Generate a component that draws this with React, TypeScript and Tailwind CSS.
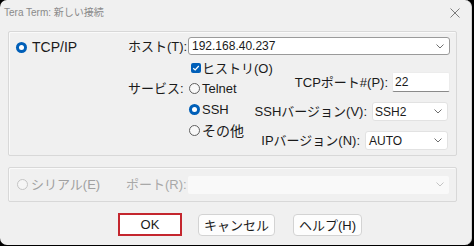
import React from "react";

const Chevron = ({ color = "#6f6f6f" }: { color?: string }) => (
  <svg width="8" height="5" viewBox="0 0 8 5" className="shrink-0">
    <path d="M0.5 0.5 L4 4 L7.5 0.5" fill="none" stroke={color} strokeWidth="1" />
  </svg>
);

const RadioOn = () => (
  <span className="w-[11px] h-[11px] rounded-full bg-[#005fb8] flex items-center justify-center shrink-0">
    <span className="w-[5px] h-[5px] rounded-full bg-white" />
  </span>
);

const RadioOff = ({ disabled = false }: { disabled?: boolean }) => (
  <span
    className={
      disabled
        ? "w-[11px] h-[11px] rounded-full border border-[#c4c4c4] bg-[#f5f5f5] shrink-0"
        : "w-[11px] h-[11px] rounded-full border border-[#5f5f5f] bg-[#f8f8f8] shrink-0"
    }
  />
);

export default function App() {
  return (
    <div className="w-[474px] h-[246px] bg-black font-['Liberation_Sans','Noto_Sans_CJK_JP',sans-serif] text-[13px] text-[#1a1a1a] leading-none whitespace-nowrap">
      <div className="w-[472px] h-[245px] rounded-[7px] bg-[#f0f0f0] border-r border-[#d4d4d4] flex flex-col overflow-hidden">
        {/* title bar */}
        <div className="h-[25px] flex items-center justify-between pl-[4px] pr-[11px] shrink-0">
          <span className="text-[10px] text-[#8a8a8a]">Tera Term: 新しい接続</span>
          <svg width="10" height="10" viewBox="0 0 10 10">
            <path d="M0.5 0.5 L9.5 9.5 M9.5 0.5 L0.5 9.5" stroke="#7c7c7c" strokeWidth="1" />
          </svg>
        </div>

        <div className="pl-[8px] flex flex-col">
          {/* group 1 */}
          <div className="mt-[6px] w-[449px] h-[125px] border border-[#d8d8d8] rounded-[2px] flex shadow-[inset_1px_1px_0_#fafafa]">
            <div className="w-[119px] shrink-0 pl-[7px]">
              <div className="mt-[5px] h-[20px] flex items-center gap-[5px]">
                <RadioOn />
                <span className="text-[14px]">TCP/IP</span>
              </div>
            </div>
            <div className="flex-1 min-w-0 flex flex-col">
              <div className="mt-[5px] h-[18px] flex items-center">
                <span className="w-[60px] shrink-0">ホスト(T):</span>
                <div className="w-[262px] h-[18px] bg-white border border-[#9a9a9a] rounded-[3px] flex items-center justify-between pl-[3px] pr-[5px]">
                  <span className="text-[12px]">192.168.40.237</span>
                  <Chevron />
                </div>
              </div>
              <div className="flex">
                <div className="w-[125px] shrink-0 flex flex-col">
                  <div className="mt-[3px] h-[20px] flex items-center pl-[63px] gap-[1px]">
                    <span className="w-[10px] h-[10px] rounded-[2px] bg-[#005fb8] flex items-center justify-center shrink-0">
                      <svg width="8" height="8" viewBox="0 0 8 8">
                        <path d="M1.2 4.2 L3.2 6 L6.8 2" fill="none" stroke="white" strokeWidth="1.2" />
                      </svg>
                    </span>
                    <span>ヒストリ(O)</span>
                  </div>
                  <div className="h-[21px] flex items-center">
                    <span className="w-[61px] shrink-0">サービス:</span>
                    <RadioOff />
                    <span className="ml-[2px]">Telnet</span>
                  </div>
                  <div className="h-[21px] flex items-center pl-[61px]">
                    <RadioOn />
                    <span className="ml-[2px]">SSH</span>
                  </div>
                  <div className="h-[21px] flex items-center pl-[61px]">
                    <RadioOff />
                    <span className="ml-[2px] text-[14px]">その他</span>
                  </div>
                </div>
                <div className="flex-1 min-w-0 flex flex-col items-end pr-[6px]">
                  <div className="mt-[17px] h-[20px] flex items-center gap-[4px] shrink-0">
                    <span>TCPポート#(P):</span>
                    <div className="w-[58px] h-[20px] bg-white border border-[#ececec] border-b-[#8a8a8a] rounded-[2px] flex items-center pl-[2px] shrink-0">
                      <span className="text-[12px]">22</span>
                    </div>
                  </div>
                  <div className="mt-[10px] h-[19px] flex items-center gap-[5px] pr-[2px] shrink-0">
                    <span>SSHバージョン(V):</span>
                    <div className="w-[76px] h-[19px] bg-white border border-[#e2e2e2] rounded-[3px] flex items-center justify-between pl-[2px] pr-[5px] shrink-0">
                      <span className="text-[12px]">SSH2</span>
                      <Chevron />
                    </div>
                  </div>
                  <div className="mt-[10px] h-[19px] flex items-center gap-[5px] pr-[2px] shrink-0">
                    <span>IPバージョン(N):</span>
                    <div className="w-[83px] h-[19px] bg-white border border-[#e2e2e2] rounded-[3px] flex items-center justify-between pl-[3px] pr-[5px] shrink-0">
                      <span className="text-[12px]">AUTO</span>
                      <Chevron />
                    </div>
                  </div>
                </div>
              </div>
            </div>
          </div>

          {/* group 2 */}
          <div className="mt-[11px] w-[449px] h-[35px] border border-[#d8d8d8] rounded-[2px] flex items-center shadow-[inset_1px_1px_0_#fafafa]">
            <div className="w-[117px] shrink-0 pl-[8px] flex items-center gap-[3px] text-[#a0a0a0]">
              <RadioOff disabled />
              <span>シリアル(E)</span>
            </div>
            <span className="w-[62px] shrink-0 text-[#a8a8a8]">ポート(R):</span>
            <div className="w-[261px] h-[18px] bg-[#f9f9f9] rounded-[2px] flex items-center justify-end pr-[5px]">
              <Chevron color="#c4c4c4" />
            </div>
          </div>

          {/* buttons */}
          <div className="mt-[11px] flex pl-[110px]">
            <div className="w-[64px] h-[23px] bg-white border-2 border-[#c4262e] flex items-center justify-center">
              OK
            </div>
            <div className="ml-[16px] w-[77px] h-[22px] mt-[1px] bg-[#fdfdfd] border border-[#d3d3d3] rounded-[4px] flex items-center justify-center">
              キャンセル
            </div>
            <div className="ml-[18px] w-[69px] h-[22px] mt-[1px] bg-[#fdfdfd] border border-[#d3d3d3] rounded-[4px] flex items-center justify-center">
              ヘルプ(H)
            </div>
          </div>
        </div>
      </div>
    </div>
  );
}
